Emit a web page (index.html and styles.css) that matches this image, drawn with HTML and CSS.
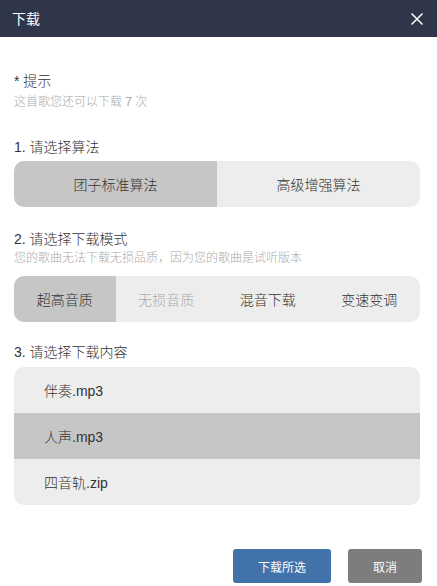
FILE: index.html
```html
<!DOCTYPE html>
<html lang="zh-CN">
<head>
<meta charset="utf-8">
<title>下载</title>
<link rel="stylesheet" href="styles.css">
</head>
<body>
<div class="dialog">
  <div class="header">
    <span class="title">下载</span>
    <svg class="close" width="14" height="14" viewBox="0 0 14 14"><path d="M1.5 1.5L12.5 12.5M12.5 1.5L1.5 12.5" stroke="#fff" stroke-width="1.5" fill="none"/></svg>
  </div>
  <div class="body">
    <div class="label tip">* 提示</div>
    <div class="sub sub-tip">这首歌您还可以下载 7 次</div>

    <div class="label l1">1. 请选择算法</div>
    <div class="seg seg2">
      <div class="opt on">团子标准算法</div>
      <div class="opt">高级增强算法</div>
    </div>

    <div class="label l2">2. 请选择下载模式</div>
    <div class="sub sub2">您的歌曲无法下载无损品质，因为您的歌曲是试听版本</div>
    <div class="seg seg4">
      <div class="opt on">超高音质</div>
      <div class="opt off">无损音质</div>
      <div class="opt">混音下载</div>
      <div class="opt">变速变调</div>
    </div>

    <div class="label l3">3. 请选择下载内容</div>
    <div class="list">
      <div class="item">伴奏.mp3</div>
      <div class="item on">人声.mp3</div>
      <div class="item">四音轨.zip</div>
    </div>

    <div class="actions">
      <button class="btn primary">下载所选</button>
      <button class="btn cancel">取消</button>
    </div>
  </div>
</div>
</body>
</html>
```
FILE: styles.css
```css
* { box-sizing: border-box; }
html, body { margin: 0; padding: 0; background: #fff; }
body {
  font-family: "Liberation Sans", "Noto Sans CJK SC", sans-serif;
  font-weight: 300;
  color: #333;
  width: 437px;
  height: 586px;
  overflow: hidden;
}
.header {
  height: 37px;
  background: #303649;
  display: flex;
  align-items: center;
  justify-content: space-between;
  padding: 0 12px 0 12px;
}
.title { color: #fff; font-size: 14px; line-height: 20px; font-weight: 400; }
.close { display: block; margin-right: 1px; }
.body { padding: 0 17px 0 14px; }
.label { font-size: 14px; line-height: 20px; color: #333; }
.sub { font-size: 12px; line-height: 16px; color: #aaa; }
.tip { margin-top: 34px; }
.sub-tip { margin-top: 3px; }
.l1 { margin-top: 27px; }
.seg {
  display: grid;
  height: 46px;
  background: #ededed;
  border-radius: 10px;
  overflow: hidden;
}
.seg2 { grid-template-columns: 1fr 1fr; margin-top: 4px; }
.seg4 { grid-template-columns: repeat(4, 1fr); margin-top: 10px; }
.opt {
  display: flex;
  align-items: center;
  justify-content: center;
  font-size: 14px;
  color: #333;
}
.opt.on { background: #c6c6c6; }
.opt.off { color: #aaa; }
.l2 { margin-top: 22px; }
.sub2 { margin-top: 1px; }
.l3 { margin-top: 20px; }
.list {
  margin-top: 5px;
  background: #ededed;
  border-radius: 10px;
  overflow: hidden;
}
.item {
  height: 46px;
  display: flex;
  align-items: center;
  padding-left: 30px;
  font-size: 14px;
  color: #333;
}
.item.on { background: #c6c6c6; }
.actions {
  margin-top: 44px;
  margin-right: -2px;
  display: flex;
  justify-content: flex-end;
  gap: 17px;
}
.btn {
  height: 34px;
  border: none;
  border-radius: 3px;
  color: #fff;
  font-family: inherit;
  font-weight: 400;
  font-size: 12px;
  padding: 0;
}
.primary { width: 98px; background: #4172a9; }
.cancel { width: 74px; background: #7d7d7d; }
```
